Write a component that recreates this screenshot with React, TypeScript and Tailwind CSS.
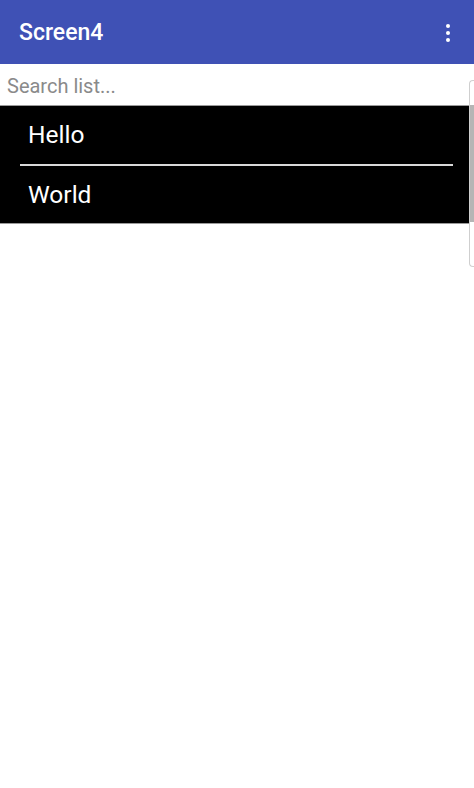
const items = ['Hello', 'World'];

export default function App() {
  return (
    <div className="relative min-h-[788px] w-full bg-white font-['Roboto',sans-serif]">
      {/* app bar */}
      <div className="flex h-16 items-center justify-between bg-[#3f51b5] pl-[19px] pr-[24px] shadow-[0_1px_2px_rgba(0,0,0,0.15)]">
        <h1 className="pt-[3px] text-[23px] font-medium text-white">Screen4</h1>
        <div className="flex flex-col items-center gap-[3px] pt-[2px]">
          <span className="h-[4px] w-[4px] rounded-full bg-white" />
          <span className="h-[4px] w-[4px] rounded-full bg-white" />
          <span className="h-[4px] w-[4px] rounded-full bg-white" />
        </div>
      </div>

      {/* search */}
      <input
        type="text"
        placeholder="Search list..."
        className="block h-[41px] w-full bg-white px-[7px] pt-[2px] text-[20px] text-gray-800 placeholder:text-[#8a8a8a] focus:outline-none"
      />

      {/* list */}
      <div className="mr-[5px] border-y border-[#9a9a9a] bg-black">
        {items.map((item, i) => (
          <div key={item}>
            {i > 0 && <div className="ml-[20px] mr-[16px] h-[2px] bg-[#d8d8d8]" />}
            <div className="flex h-[57.5px] items-center pl-[28px] pt-[2px] text-[24.5px] text-white">{item}</div>
          </div>
        ))}
      </div>

      {/* scroll indicator */}
      <div className="absolute right-0 top-[80px] h-[187px] w-[5px] rounded-l-[4px] border border-r-0 border-[#cfcfcf] bg-white">
        <div className="mt-[24px] h-[117px] bg-[#b5b5b5]" />
      </div>
    </div>
  );
}
